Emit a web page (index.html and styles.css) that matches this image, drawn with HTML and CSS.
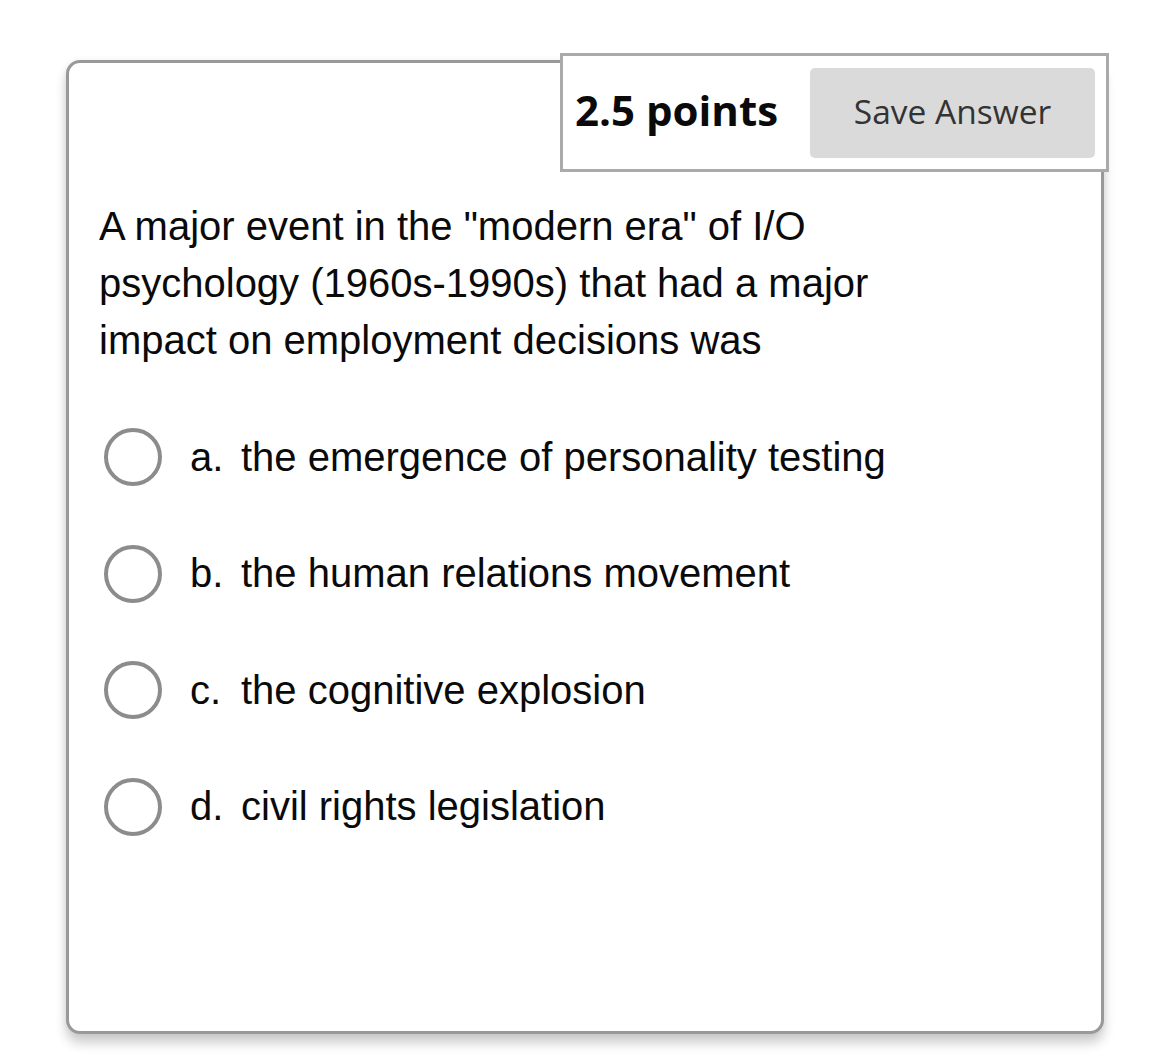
FILE: index.html
```html
<!DOCTYPE html>
<html lang="en">
<head>
<meta charset="utf-8">
<title>Question</title>
<link rel="stylesheet" href="styles.css">
</head>
<body>
<div class="page">
  <div class="card">
    <div class="head">
      <div class="points-box">
        <span class="points">2.5 points</span>
        <button class="save" type="button">Save Answer</button>
      </div>
    </div>
    <p class="question">A major event in the "modern era" of I/O psychology (1960s-1990s) that had a major impact on employment decisions was</p>
    <ul class="options">
      <li class="option"><span class="radio"></span><span class="letter">a.</span><span class="text">the emergence of personality testing</span></li>
      <li class="option"><span class="radio"></span><span class="letter">b.</span><span class="text">the human relations movement</span></li>
      <li class="option"><span class="radio"></span><span class="letter">c.</span><span class="text">the cognitive explosion</span></li>
      <li class="option"><span class="radio"></span><span class="letter">d.</span><span class="text">civil rights legislation</span></li>
    </ul>
  </div>
</div>
</body>
</html>
```
FILE: styles.css
```css
html, body {
  margin: 0;
  padding: 0;
  background: #ffffff;
}
body {
  font-family: "Liberation Sans", Arial, sans-serif;
  color: #0a0a0a;
}
.page {
  padding: 60px 0 22px 66px;
}
.card {
  box-sizing: border-box;
  width: 1038px;
  height: 974px;
  border: 3px solid #999999;
  border-radius: 14px;
  background: #ffffff;
  box-shadow: 0 9px 12px rgba(0, 0, 0, 0.2), 0 0 6px rgba(0, 0, 0, 0.06);
}
.head {
  display: flex;
  justify-content: flex-end;
  margin: -10px -8px 0 0;
}
.points-box {
  box-sizing: border-box;
  width: 549px;
  height: 119px;
  border: 3px solid #aaaaaa;
  background: #ffffff;
  padding: 12px 11px 11px 12px;
  display: flex;
  align-items: center;
  justify-content: space-between;
}
.points {
  font-family: "Open Sans", sans-serif;
  font-weight: 700;
  font-size: 42px;
  line-height: 1;
  color: #0a0a0a;
  margin-bottom: 6px;
}
.save {
  box-sizing: border-box;
  width: 285px;
  height: 90px;
  border: none;
  border-radius: 5px;
  background: #dadada;
  font-family: "Open Sans", sans-serif;
  font-size: 33.5px;
  color: #333333;
  padding: 0 0 5px 0;
}
.question {
  margin: 26px 0 0 30px;
  font-size: 40px;
  line-height: 57px;
  width: 820px;
}
.options {
  list-style: none;
  margin: 59px 0 0 35px;
  padding: 0;
  display: flex;
  flex-direction: column;
  gap: 58.67px;
}
.option {
  display: flex;
  align-items: center;
  height: 58px;
  font-size: 40px;
}
.radio {
  box-sizing: border-box;
  width: 58px;
  height: 58px;
  border: 4px solid #8c8c8c;
  border-radius: 50%;
  flex: none;
  margin-right: 28px;
}
.letter {
  width: 51px;
  flex: none;
}
```
